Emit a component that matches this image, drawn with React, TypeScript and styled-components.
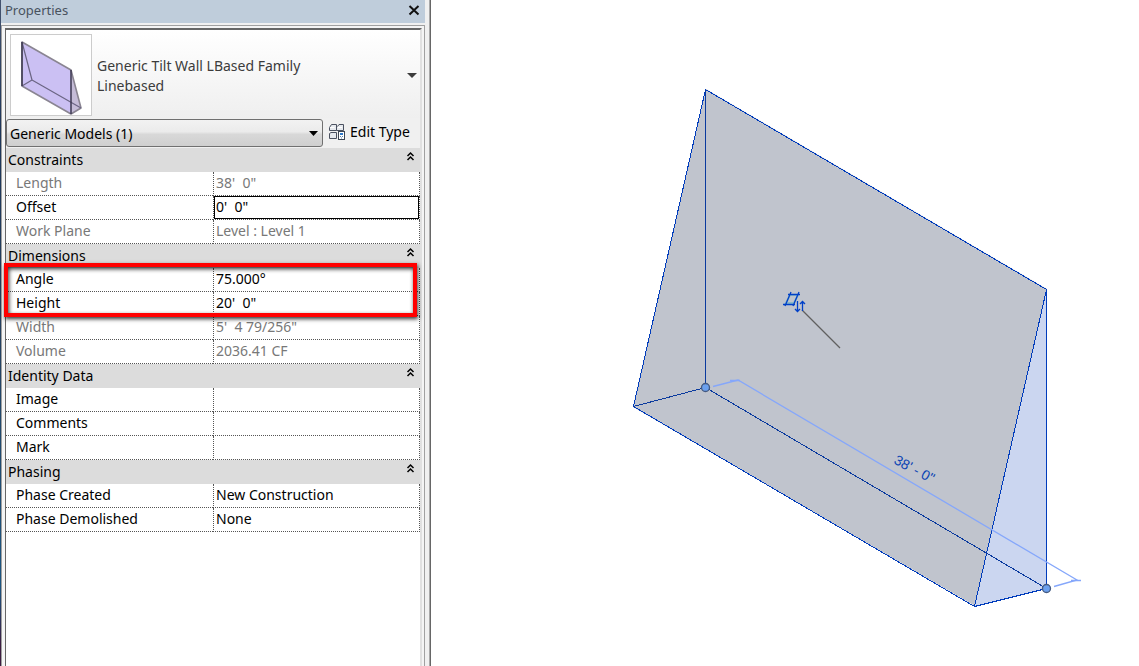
import React, { useState } from "react";
import styled, { createGlobalStyle } from "styled-components";

const GlobalStyle = createGlobalStyle`
  * { box-sizing: border-box; }
  body {
    margin: 0;
    background: #fff;
    font-family: "Noto Sans", "Open Sans", sans-serif;
    font-size: 14px;
    line-height: 20px;
    color: #000;
  }
  button, input, select { font: inherit; color: inherit; }
`;

const Workspace = styled.div`
  display: flex;
  min-height: 100vh;
  overflow: hidden;
`;

const DesktopEdge = styled.div`
  flex: none;
  width: 1px;
  background: linear-gradient(#44536f 0%, #1d3558 20%, #24405f 50%, #1c5580 88%, #3c1c40 97%);
`;

const Panel = styled.aside`
  flex: none;
  display: flex;
  flex-direction: column;
  width: 430px;
  background: #f0f0f0;
  border-right: 1px solid #666;
  box-shadow: inset -1px 0 #a8a8a8;
`;

const TitleBar = styled.header`
  display: flex;
  align-items: center;
  justify-content: space-between;
  height: 23px;
  margin-right: 5px;
  padding: 0 5px 3px 4px;
  background: #bfcddb;
  color: #48525e;
`;

const Title = styled.h1`
  margin: 0;
  font-size: 13px;
  font-weight: 400;
`;

const IconButton = styled.button`
  display: flex;
  padding: 0;
  border: 0;
  background: none;
`;

const Frame = styled.div`
  flex: 1;
  display: flex;
  flex-direction: column;
  margin: 2px 5px 0 0;
  padding: 2px 2px 0 3px;
  border: solid #a0a0a0;
  border-width: 1px 1px 0 1px;
  background: #f4f4f4;
`;

const Content = styled.div`
  flex: 1;
  border: solid;
  border-width: 2px 2px 0 1px;
  border-color: #666 #e0e0e0 #666 #666;
  background: #fff;
`;

const TypeSelector = styled.button`
  display: flex;
  align-items: center;
  gap: 5px;
  width: 100%;
  height: 88px;
  padding: 2px 3px 0 4px;
  border: 0;
  background: linear-gradient(#fff, #efefef);
  color: #3c3c3c;
  text-align: left;
`;

const Thumbnail = styled.span`
  flex: none;
  display: flex;
  width: 82px;
  height: 82px;
  border: 1px solid #ccc;
  background: #fff;
`;

const TypeName = styled.span`
  flex: 1;
  padding-top: 2px;
`;

const FilterBar = styled.div`
  display: flex;
  align-items: center;
  gap: 6px;
  height: 30px;
  padding-bottom: 1px;
  background: #f0f0f0;
`;

const SelectBox = styled.div`
  position: relative;
  flex: 1;
  display: flex;
`;

const FilterSelect = styled.select`
  appearance: none;
  width: 100%;
  height: 28px;
  padding: 2px 24px 0 3px;
  border: 1px solid #707070;
  border-radius: 3px;
  background: linear-gradient(#f2f2f2, #ebebeb 45%, #d8d8d8 55%, #cfcfcf);
`;

const SelectArrow = styled.svg`
  position: absolute;
  top: 12px;
  right: 5px;
  pointer-events: none;
`;

const EditButton = styled.button`
  display: flex;
  align-items: center;
  gap: 4px;
  width: 91px;
  padding: 0 0 1px;
  border: 0;
  background: none;
  white-space: nowrap;
`;

const Properties = styled.div`
  position: relative;
`;

const Highlight = styled.div`
  position: absolute;
  top: 115px;
  left: -2px;
  right: 3px;
  height: 54px;
  border: 4px solid #f00;
  box-shadow: 1px 2px 4px rgba(0, 0, 0, 0.8), inset 1px 2px 4px rgba(0, 0, 0, 0.8);
  pointer-events: none;
`;

const Grid = styled.table`
  width: 100%;
  table-layout: fixed;
  border-collapse: separate;
  border-spacing: 0;
`;

const NameColumn = styled.col`
  width: 50%;
`;

const GroupHead = styled.th`
  height: 24px;
  padding: 0;
  background: #dcdcdc;
  font-weight: 400;
  text-align: left;
`;

const GroupToggle = styled.button`
  display: flex;
  align-items: flex-start;
  justify-content: space-between;
  width: 100%;
  height: 24px;
  padding: 2px 5px 0 2px;
  border: 0;
  background: none;
`;

const NameCell = styled.th<{ $locked?: boolean }>`
  height: 24px;
  padding: 0 0 2px 10px;
  border-bottom: 1px dotted #555;
  color: ${(p) => (p.$locked ? "#787878" : "#000")};
  font-weight: 400;
  text-align: left;
`;

const ValueCell = styled.td`
  height: 24px;
  padding: 0;
  border: dotted #555;
  border-width: 0 1px 1px 1px;
`;

const ValueInput = styled.input<{ $active?: boolean }>`
  display: block;
  width: 100%;
  height: 23px;
  padding: 0 0 2px ${(p) => (p.$active ? 1 : 2)}px;
  border: ${(p) => (p.$active ? "1px solid #000" : "0")};
  background: none;
  outline: none;

  &:disabled { color: #787878; }
`;

const View = styled.main`
  flex: 1;
  min-width: 0;
`;

const Drawing = styled.svg`
  display: block;
  width: 100%;
`;

type Property = { name: string; value: string; locked?: boolean; active?: boolean };

const groups: { title: string; rows: Property[] }[] = [
  {
    title: "Constraints",
    rows: [
      { name: "Length", value: "38'  0\"", locked: true },
      { name: "Offset", value: "0'  0\"", active: true },
      { name: "Work Plane", value: "Level : Level 1", locked: true },
    ],
  },
  {
    title: "Dimensions",
    rows: [
      { name: "Angle", value: "75.000°" },
      { name: "Height", value: "20'  0\"" },
      { name: "Width", value: "5'  4 79/256\"", locked: true },
      { name: "Volume", value: "2036.41 CF", locked: true },
    ],
  },
  {
    title: "Identity Data",
    rows: [
      { name: "Image", value: "" },
      { name: "Comments", value: "" },
      { name: "Mark", value: "" },
    ],
  },
  {
    title: "Phasing",
    rows: [
      { name: "Phase Created", value: "New Construction" },
      { name: "Phase Demolished", value: "None" },
    ],
  },
];

function WallThumbnail() {
  return (
    <svg width="80" height="80" viewBox="0 0 80 80" fill="none" strokeLinejoin="round">
      <path d="M60 35L70 73L60 79Z" fill="#c5bcd8" />
      <path d="M11 7L60 35V79L11 51Z" fill="#cbc0f3" />
      <path d="M11 7L60 35L70 73L60 79L11 51Z" stroke="#8a8592" strokeWidth="1.6" />
      <path d="M11 7L21 45L70 73M21 45L11 51" stroke="#6b6584" strokeWidth="1.2" />
      <path d="M11 7V51M60 35V79" stroke="#3c3850" strokeWidth="1.5" />
    </svg>
  );
}

function EditTypeIcon() {
  return (
    <svg width="17" height="17" viewBox="0 0 17 17" fill="none">
      <path d="M.5 3.5L2.5 .5H7.500V6.500H.5ZM8.500 2.500L10 .5H14.500V6.500H7.500M.5 14.500V9.500L2 8.500H7.500V14.500Z" fill="#e6e9ee" stroke="#4a5160" />
      <path d="M1 3.500H5.500M9 3.500H13" stroke="#fff" />
      <rect x="9.5" y="7.5" width="6" height="8" fill="#fff" stroke="#3d4654" />
      <path d="M11 9H14V11H11Z" fill="#2d78c8" />
      <path d="M11 12.500H12M13 12.500H14M12 14H13" stroke="#5b84b0" />
    </svg>
  );
}

function DownArrow() {
  return (
    <svg width="10" height="5" viewBox="0 0 10 5" aria-hidden="true">
      <path d="M0 0H10L5 5Z" fill="#3c3c3c" />
    </svg>
  );
}

function Chevrons() {
  return (
    <svg width="9" height="12" viewBox="0 0 9 12" fill="none" stroke="#000" strokeWidth="1.500">
      <path d="M1.500 6L4.500 3L7.500 6M1.500 10L4.500 7L7.500 10" />
    </svg>
  );
}

function PropertyGroup({ title, rows }: { title: string; rows: Property[] }) {
  const [open, setOpen] = useState(true);
  return (
    <tbody>
      <tr>
        <GroupHead colSpan={2}>
          <GroupToggle type="button" aria-expanded={open} onClick={() => setOpen(!open)}>
            {title}
            <Chevrons />
          </GroupToggle>
        </GroupHead>
      </tr>
      {open &&
        rows.map((row) => {
          const id = row.name.toLowerCase().replace(/ /g, "-");
          return (
            <tr key={id}>
              <NameCell scope="row" $locked={row.locked}>
                <label htmlFor={id}>{row.name}</label>
              </NameCell>
              <ValueCell>
                <ValueInput id={id} defaultValue={row.value} disabled={row.locked} $active={row.active} />
              </ValueCell>
            </tr>
          );
        })}
    </tbody>
  );
}

function WallView() {
  return (
    <Drawing viewBox="431 0 708 666" preserveAspectRatio="xMinYMin meet" fill="none">
      <path d="M1047 289V588L975 606Z" fill="#cbd6f0" />
      <path d="M706 89L1047 289L975 606L633 407Z" fill="#c0c4cd" />
      <g stroke="#003cbc" shapeRendering="crispEdges">
        <path d="M705.5 89.500L1046.500 289.500L974.500 606.500L633.500 406.500Z" />
        <path d="M1046.500 289.500V588.500L974.500 606.500" />
        <path d="M705.500 89.500V387.500L633.500 406.500M705.500 387.500L1046.500 588.500" stroke="#0a3a9e" />
      </g>
      <g stroke="#85a7fb" strokeWidth="1.300">
        <path d="M713 386.500L738 380L1077 580L1054 586.500" />
        <path d="M730 380.500H740M1071 580.500H1081" />
      </g>
      <g fill="#6ba0ee" stroke="#455a80" strokeWidth="1.300">
        <circle cx="705.500" cy="387.500" r="4" />
        <circle cx="1046.500" cy="588.500" r="4" />
      </g>
      <path d="M802 310L840 348" stroke="#606060" strokeWidth="1.300" />
      <path d="M790 295H798L794 303H786Z" stroke="#88b8c8" strokeWidth="2" />
      <g stroke="#0040c8" strokeWidth="1.300">
        <path d="M788 294.500H800M783 304.500H795M791 292L785 306M799 292L793 306" />
        <path d="M797.500 301V311M795 309L797.500 311.500L800 309M802.500 311V301M800 304L802.500 301.500L805 304" />
      </g>
      <text
        x="893"
        y="463"
        transform="rotate(28 893 463)"
        fill="#0b44b4"
        fontFamily="Liberation Sans, Arial, sans-serif"
        fontSize="14"
      >
        38' - 0"
      </text>
    </Drawing>
  );
}

export default function App() {
  return (
    <>
      <GlobalStyle />
      <Workspace>
        <DesktopEdge />
        <Panel>
          <TitleBar>
            <Title>Properties</Title>
            <IconButton type="button" aria-label="Close">
              <svg width="12" height="12" viewBox="0 0 12 12" stroke="#111" strokeWidth="2">
                <path d="M1.500 2L10.500 10.500M10.500 2L1.500 10.500" />
              </svg>
            </IconButton>
          </TitleBar>
          <Frame>
            <Content>
              <TypeSelector type="button">
                <Thumbnail>
                  <WallThumbnail />
                </Thumbnail>
                <TypeName>
                  Generic Tilt Wall LBased Family
                  <br />
                  Linebased
                </TypeName>
                <DownArrow />
              </TypeSelector>
              <FilterBar>
                <SelectBox>
                  <FilterSelect aria-label="Filter">
                    <option>Generic Models (1)</option>
                  </FilterSelect>
                  <SelectArrow width="9" height="5" viewBox="0 0 9 5">
                    <path d="M0 0H9L4.500 5Z" fill="#000" />
                  </SelectArrow>
                </SelectBox>
                <EditButton type="button">
                  <EditTypeIcon />
                  Edit Type
                </EditButton>
              </FilterBar>
              <Properties>
                <Grid>
                  <colgroup>
                    <NameColumn />
                    <col />
                  </colgroup>
                  {groups.map((group) => (
                    <PropertyGroup key={group.title} {...group} />
                  ))}
                </Grid>
                <Highlight />
              </Properties>
            </Content>
          </Frame>
        </Panel>
        <View>
          <WallView />
        </View>
      </Workspace>
    </>
  );
}
